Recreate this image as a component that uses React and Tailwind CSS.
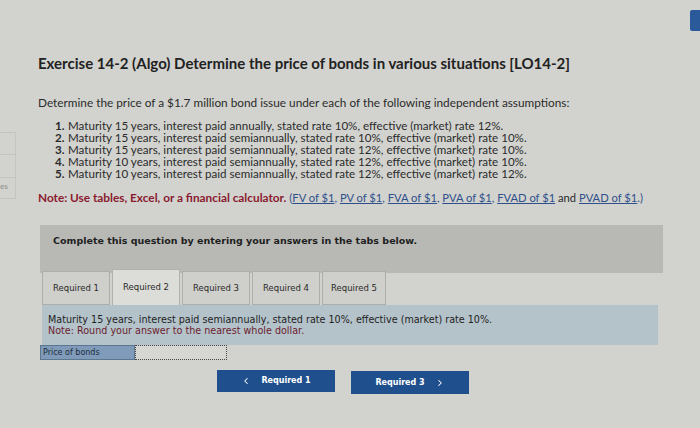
import React from 'react';
import { ChevronLeft, ChevronRight } from 'lucide-react';

const items = [
  'Maturity 15 years, interest paid annually, stated rate 10%, effective (market) rate 12%.',
  'Maturity 15 years, interest paid semiannually, stated rate 10%, effective (market) rate 10%.',
  'Maturity 15 years, interest paid semiannually, stated rate 12%, effective (market) rate 10%.',
  'Maturity 10 years, interest paid semiannually, stated rate 12%, effective (market) rate 10%.',
  'Maturity 10 years, interest paid semiannually, stated rate 12%, effective (market) rate 12%.',
];

const links = ['FV of $1', 'PV of $1', 'FVA of $1', 'PVA of $1', 'FVAD of $1'];

const tabs = ['Required 1', 'Required 2', 'Required 3', 'Required 4', 'Required 5'];

const App = () => {
  return (
    <div className="relative w-[700px] h-[428px] overflow-hidden bg-[#d2d3cf] flex text-[#2b2b2b]">
      {/* sidebar remnant */}
      <div className="w-[16px] pt-[132px] flex flex-col">
        <div className="h-[23px] border border-l-0 border-[#c4c5c1]" />
        <div className="h-[23px] border border-l-0 border-t-0 border-[#c4c5c1]" />
        <div className="h-[21px] border border-l-0 border-t-0 border-[#c4c5c1] text-[7px] text-[#8a8b88] leading-[18px] font-['DejaVu_Sans',sans-serif]">es</div>
      </div>

      {/* top right button */}
      <div className="absolute right-0 top-[10px] w-[10px] h-[21px] bg-[#2a5a9a] rounded-l-[2px]" />

      <div className="flex-1 pl-[22px] pt-[53px] font-['Lato',sans-serif]">
        <h1 className="text-[15px] font-bold leading-[20px] text-[#222]">
          Exercise 14-2 (Algo) Determine the price of bonds in various situations [LO14-2]
        </h1>

        <p className="mt-[22px] text-[11.8px] leading-[16px]">
          Determine the price of a $1.7 million bond issue under each of the following independent assumptions:
        </p>

        <ol className="mt-[9px] pl-[17px] text-[11.6px] leading-[12px]">
          {items.map((t, i) => (
            <li key={i} className="flex h-[12px]">
              <span className="w-[13px] font-bold">{i + 1}.</span>
              <span>{t}</span>
            </li>
          ))}
        </ol>

        <p className="mt-[10px] text-[11.8px] leading-[16px]">
          <span className="font-bold text-[#8a1a2e]">Note: Use tables, Excel, or a financial calculator.</span>{' '}
          <span className="text-[11.2px]">
            <span className="text-[#2e4f8a]">
              (
              {links.map((l, i) => (
                <React.Fragment key={l}>
                  <span className="underline">{l}</span>
                  {i < links.length - 1 ? ', ' : ' '}
                </React.Fragment>
              ))}
            </span>
            <span>and </span>
            <span className="text-[#2e4f8a]"><span className="underline">PVAD of $1</span>.)</span>
          </span>
        </p>

        <div className="mt-[19px] w-[623px] ml-[2px] bg-[#b8b9b5] pt-[9px] pb-[25px] pl-[13px]">
          <p className="font-['DejaVu_Sans',sans-serif] font-bold text-[9.5px] leading-[14px] text-[#1e1e1e]">
            Complete this question by entering your answers in the tabs below.
          </p>
        </div>

        <div className="-mt-[4px] ml-[4px] w-[616px] font-['DejaVu_Sans',sans-serif]">
          <div className="flex gap-[2px] items-end">
            {tabs.map((t, i) => (
              <div
                key={t}
                className={
                  i === 1
                    ? 'w-[68px] h-[36px] bg-[#dcdcd8] border border-b-0 border-[#b0b0ac] flex items-center justify-center text-[8.5px] text-[#2a2a2a]'
                    : i === 4
                      ? 'w-[64px] h-[34px] bg-[#cfcfcb] border border-[#aeaeaa] flex items-center justify-center text-[8.5px] text-[#2a2a2a]'
                      : 'w-[68px] h-[34px] bg-[#cfcfcb] border border-[#aeaeaa] flex items-center justify-center text-[8.5px] text-[#2a2a2a]'
                }
              >
                {t}
              </div>
            ))}
          </div>
          <div className="bg-[#b4c2ca] h-[40px] pt-[9px] pl-[6px] text-[9.6px] leading-[11px]">
            <p className="text-[#222]">Maturity 15 years, interest paid semiannually, stated rate 10%, effective (market) rate 10%.</p>
            <p className="text-[#6a1f2e]">Note: Round your answer to the nearest whole dollar.</p>
          </div>
        </div>

        <div className="mt-[0px] ml-[2px] flex h-[15px] font-['DejaVu_Sans',sans-serif]">
          <div className="w-[95px] bg-[#7f9bb9] border border-[#5d7690] text-[8px] leading-[13px] pl-[2px] text-[#1c2b3c]">
            Price of bonds
          </div>
          <div className="w-[92px] border border-dotted border-[#444] bg-[#d6d6d2]" />
        </div>

        <div className="mt-[10px] ml-[179px] flex gap-[16px] font-['DejaVu_Sans',sans-serif]">
          <div className="w-[118px] h-[22px] bg-[#1f4f8d] flex items-center justify-center gap-[10px] text-white text-[8px] font-bold">
            <ChevronLeft size={10} strokeWidth={2.5} />
            <span>Required 1</span>
          </div>
          <div className="w-[118px] h-[23px] mt-[1px] bg-[#1f4f8d] flex items-center justify-center gap-[10px] text-white text-[8px] font-bold">
            <span>Required 3</span>
            <ChevronRight size={10} strokeWidth={2.5} />
          </div>
        </div>
      </div>
    </div>
  );
};

export default App;
